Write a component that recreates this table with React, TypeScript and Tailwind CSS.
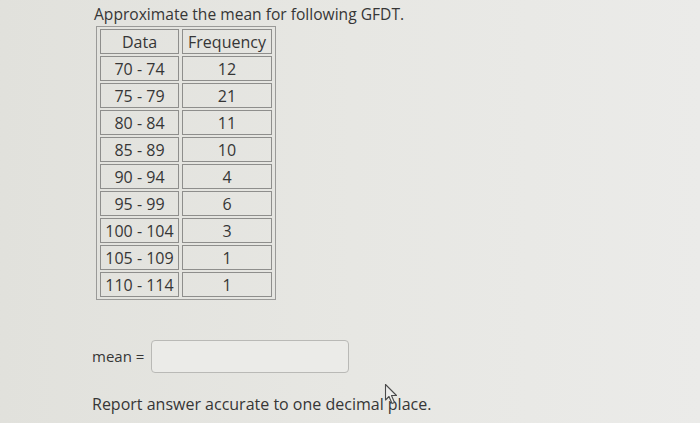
import React from "react";

const rows: [string, string][] = [
  ["70 - 74", "12"],
  ["75 - 79", "21"],
  ["80 - 84", "11"],
  ["85 - 89", "10"],
  ["90 - 94", "4"],
  ["95 - 99", "6"],
  ["100 - 104", "3"],
  ["105 - 109", "1"],
  ["110 - 114", "1"],
];

const cell = "h-[25px] border border-[#8e8e8c] p-0 text-center align-middle leading-[20px]";

const Pointer: React.FC = () => (
  <svg
    className="absolute left-[384px] top-[383px]"
    width="14"
    height="24"
    viewBox="0 0 14 24"
    fill="none"
  >
    <path
      d="M1.5 1.5 L1.5 17 L5 13.5 L8 20.5 L10.5 19.5 L7.5 12.5 L12.5 12.5 Z"
      stroke="#4a4a4a"
      strokeWidth="1.1"
      strokeLinejoin="round"
      fill="#ececea"
    />
  </svg>
);

const App: React.FC = () => {
  return (
    <div
      className="relative h-[423px] w-[700px] overflow-hidden bg-gradient-to-r from-[#e1e1dc] via-[#e7e7e3] to-[#ebebe9] text-[16px] text-[#363636]"
      style={{ fontFamily: '"Open Sans", "Liberation Sans", sans-serif' }}
    >
      <div className="flex flex-col pl-[94px] pt-[4px]">
        <h1 className="text-[15.6px] leading-[20px]">Approximate the mean for following GFDT.</h1>

        <table className="ml-[2px] mt-[2px] w-[180px] border-separate border border-[#9a9a98] border-spacing-x-[3px] border-spacing-y-[2px]">
          <thead>
            <tr>
              <th className={`${cell} w-[79px] font-normal`}>Data</th>
              <th className={`${cell} font-normal`}>Frequency</th>
            </tr>
          </thead>
          <tbody>
            {rows.map(([data, freq]) => (
              <tr key={data}>
                <td className={cell}>{data}</td>
                <td className={cell}>{freq}</td>
              </tr>
            ))}
          </tbody>
        </table>

        <div className="ml-[-2px] mt-[40px] flex items-center gap-[7px]">
          <span className="text-[15px]">mean =</span>
          <input
            type="text"
            className="h-[33px] w-[198px] rounded-[4px] border border-[#b9b9b6] bg-[#ebebe8] outline-none"
          />
        </div>

        <p className="ml-[-2px] mt-[21px] leading-[20px]">
          Report answer accurate to one decimal place.
        </p>
      </div>
      <Pointer />
    </div>
  );
};

export default App;
